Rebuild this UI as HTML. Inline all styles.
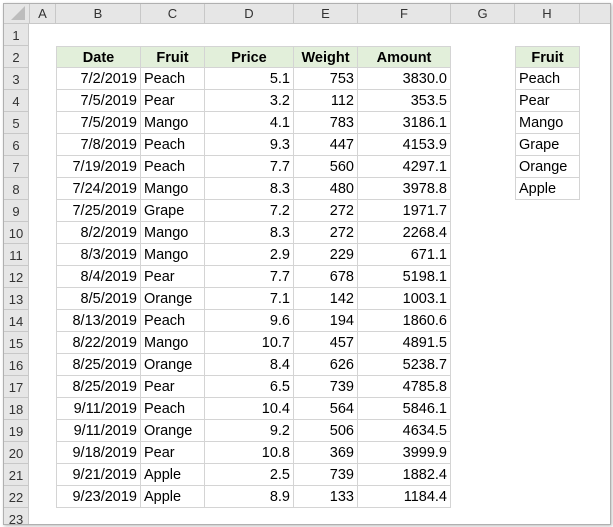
<!DOCTYPE html>
<html><head><style>
body{margin:0;width:613px;height:527px;background:#fff;position:relative;overflow:hidden;font-family:"Liberation Sans",sans-serif;}
#f{position:absolute;left:3px;top:3px;width:606px;height:520px;border:1px solid #b0b0b0;box-shadow:1px 1px 3px #bbb;overflow:hidden;background:#fff}
.ch{position:absolute;top:0;height:20px;background:#e6e6e6;border-right:1px solid #c8c8c8;border-bottom:1px solid #c8c8c8;box-sizing:border-box;font-size:13px;color:#333;text-align:center;line-height:20px}
.rh{position:absolute;left:0;width:25px;background:#e6e6e6;border-right:1px solid #c8c8c8;border-bottom:1px solid #c8c8c8;box-sizing:border-box;font-size:13px;color:#333;text-align:center;line-height:24px}
.c{position:absolute;box-sizing:border-box;border-right:1px solid #d4d4d4;border-bottom:1px solid #d4d4d4;font-size:14.5px;line-height:22px;padding:0 3px;white-space:nowrap;color:#000}
.h{background:#e2efda;font-weight:bold;text-align:center}
.r{text-align:right}
</style></head><body><div id="f">
<div class="ch" style="left:0;width:26px"><svg width="14" height="14" style="position:absolute;right:4px;bottom:3px"><polygon points="14,0 14,14 0,14" fill="#bdbdbd"/></svg></div>
<div class="ch" style="left:26px;width:26px">A</div>
<div class="ch" style="left:52px;width:85px">B</div>
<div class="ch" style="left:137px;width:64px">C</div>
<div class="ch" style="left:201px;width:89px">D</div>
<div class="ch" style="left:290px;width:64px">E</div>
<div class="ch" style="left:354px;width:93px">F</div>
<div class="ch" style="left:447px;width:64px">G</div>
<div class="ch" style="left:511px;width:65px">H</div>
<div class="ch" style="left:576px;width:40px;border-right:none"></div>
<div id="rows"></div>
</div>
<script>
(function(){
var d=[["7/2/2019","Peach","5.1","753","3830.0"],["7/5/2019","Pear","3.2","112","353.5"],["7/5/2019","Mango","4.1","783","3186.1"],["7/8/2019","Peach","9.3","447","4153.9"],["7/19/2019","Peach","7.7","560","4297.1"],["7/24/2019","Mango","8.3","480","3978.8"],["7/25/2019","Grape","7.2","272","1971.7"],["8/2/2019","Mango","8.3","272","2268.4"],["8/3/2019","Mango","2.9","229","671.1"],["8/4/2019","Pear","7.7","678","5198.1"],["8/5/2019","Orange","7.1","142","1003.1"],["8/13/2019","Peach","9.6","194","1860.6"],["8/22/2019","Mango","10.7","457","4891.5"],["8/25/2019","Orange","8.4","626","5238.7"],["8/25/2019","Pear","6.5","739","4785.8"],["9/11/2019","Peach","10.4","564","5846.1"],["9/11/2019","Orange","9.2","506","4634.5"],["9/18/2019","Pear","10.8","369","3999.9"],["9/21/2019","Apple","2.5","739","1882.4"],["9/23/2019","Apple","8.9","133","1184.4"]];
var hf=["Peach","Pear","Mango","Grape","Orange","Apple"];
var cols=[[52,85],[137,64],[201,89],[290,64],[354,93]];
var s="";
for(var r=1;r<=23;r++){var t=20+22*(r-1);s+='<div class="rh" style="top:'+t+'px;height:22px">'+r+'</div>';}
var hd=["Date","Fruit","Price","Weight","Amount"];
var t2=42;
for(var i=0;i<5;i++)s+='<div class="c h" style="left:'+cols[i][0]+'px;top:'+t2+'px;width:'+cols[i][1]+'px;height:22px;'+(i==0?'border-left:1px solid #d4d4d4;':'')+'border-top:1px solid #d4d4d4">'+hd[i]+'</div>';
for(var r=0;r<20;r++){var t=64+22*r;for(var i=0;i<5;i++){s+='<div class="c'+(i==1?'':' r')+'" style="left:'+cols[i][0]+'px;top:'+t+'px;width:'+cols[i][1]+'px;height:22px;'+(i==0?'border-left:1px solid #d4d4d4;':'')+'">'+d[r][i]+'</div>';}}
s+='<div class="c h" style="left:511px;top:42px;width:65px;height:22px;border-left:1px solid #d4d4d4;border-top:1px solid #d4d4d4">Fruit</div>';
for(var r=0;r<6;r++)s+='<div class="c" style="left:511px;top:'+(64+22*r)+'px;width:65px;height:22px;border-left:1px solid #d4d4d4">'+hf[r]+'</div>';
document.getElementById("rows").innerHTML=s;
})();
</script>
</body></html>
